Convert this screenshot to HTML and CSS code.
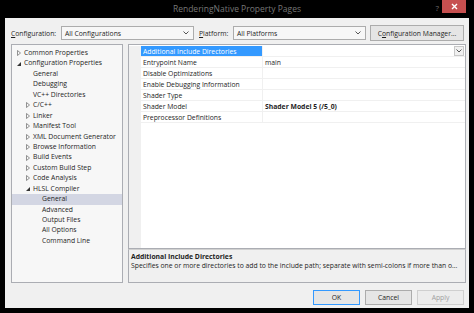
FILE: index.html
```html
<!DOCTYPE html>
<html>
<head>
<meta charset="utf-8">
<title>RenderingNative Property Pages</title>
<link rel="stylesheet" href="styles.css">
</head>
<body>
<div class="window">
  <div class="titlebar">
    <span class="title">RenderingNative Property Pages</span>
    <span class="help">?</span>
    <span class="close"><svg width="7" height="7" viewBox="0 0 7 7"><path d="M1 1L6 6M6 1L1 6" stroke="#fff" stroke-width="1.4"/></svg></span>
  </div>
  <div class="dialog">
    <div class="toprow">
      <span class="lbl lbl-config"><u>C</u>onfiguration:</span>
      <div class="combo combo-config"><span class="combo-text">All Configurations</span><svg class="chev" width="6" height="4" viewBox="0 0 6 4"><path d="M0.5 0.5L3 3L5.5 0.5" fill="none" stroke="#555" stroke-width="1"/></svg></div>
      <span class="lbl lbl-platform"><u>P</u>latform:</span>
      <div class="combo combo-platform"><span class="combo-text">All Platforms</span><svg class="chev" width="6" height="4" viewBox="0 0 6 4"><path d="M0.5 0.5L3 3L5.5 0.5" fill="none" stroke="#555" stroke-width="1"/></svg></div>
      <div class="btn btn-manager">C<u>o</u>nfiguration Manager...</div>
    </div>
    <div class="main">
      <div class="tree">
        <div class="node lv0"><span class="tri"><svg width="4" height="6" viewBox="0 0 4 6"><path d="M0.5 0.5L3.5 3L0.5 5.5Z" fill="none" stroke="#777" stroke-width="0.8"/></svg></span>Common Properties</div>
        <div class="node lv0"><span class="tri"><svg width="4" height="4" viewBox="0 0 4 4"><path d="M4 0L4 4L0 4Z" fill="#333"/></svg></span>Configuration Properties</div>
        <div class="node lv1">General</div>
        <div class="node lv1">Debugging</div>
        <div class="node lv1">VC++ Directories</div>
        <div class="node lv1 has"><span class="tri"><svg width="4" height="6" viewBox="0 0 4 6"><path d="M0.5 0.5L3.5 3L0.5 5.5Z" fill="none" stroke="#777" stroke-width="0.8"/></svg></span>C/C++</div>
        <div class="node lv1 has"><span class="tri"><svg width="4" height="6" viewBox="0 0 4 6"><path d="M0.5 0.5L3.5 3L0.5 5.5Z" fill="none" stroke="#777" stroke-width="0.8"/></svg></span>Linker</div>
        <div class="node lv1 has"><span class="tri"><svg width="4" height="6" viewBox="0 0 4 6"><path d="M0.5 0.5L3.5 3L0.5 5.5Z" fill="none" stroke="#777" stroke-width="0.8"/></svg></span>Manifest Tool</div>
        <div class="node lv1 has"><span class="tri"><svg width="4" height="6" viewBox="0 0 4 6"><path d="M0.5 0.5L3.5 3L0.5 5.5Z" fill="none" stroke="#777" stroke-width="0.8"/></svg></span>XML Document Generator</div>
        <div class="node lv1 has"><span class="tri"><svg width="4" height="6" viewBox="0 0 4 6"><path d="M0.5 0.5L3.5 3L0.5 5.5Z" fill="none" stroke="#777" stroke-width="0.8"/></svg></span>Browse Information</div>
        <div class="node lv1 has"><span class="tri"><svg width="4" height="6" viewBox="0 0 4 6"><path d="M0.5 0.5L3.5 3L0.5 5.5Z" fill="none" stroke="#777" stroke-width="0.8"/></svg></span>Build Events</div>
        <div class="node lv1 has"><span class="tri"><svg width="4" height="6" viewBox="0 0 4 6"><path d="M0.5 0.5L3.5 3L0.5 5.5Z" fill="none" stroke="#777" stroke-width="0.8"/></svg></span>Custom Build Step</div>
        <div class="node lv1 has"><span class="tri"><svg width="4" height="6" viewBox="0 0 4 6"><path d="M0.5 0.5L3.5 3L0.5 5.5Z" fill="none" stroke="#777" stroke-width="0.8"/></svg></span>Code Analysis</div>
        <div class="node lv1 has"><span class="tri"><svg width="4" height="4" viewBox="0 0 4 4"><path d="M4 0L4 4L0 4Z" fill="#333"/></svg></span>HLSL Compiler</div>
        <div class="node lv2 selected">General</div>
        <div class="node lv2">Advanced</div>
        <div class="node lv2">Output Files</div>
        <div class="node lv2">All Options</div>
        <div class="node lv2">Command Line</div>
      </div>
      <div class="right">
        <div class="grid">
          <div class="row">
            <div class="gutter"></div>
            <div class="name"><span class="sel">Additional Include Directories</span></div>
            <div class="value value-drop"><span class="dropbtn"><svg width="6" height="4" viewBox="0 0 6 4"><path d="M0.5 0.5L3 3L5.5 0.5" fill="none" stroke="#555" stroke-width="1"/></svg></span></div>
          </div>
          <div class="row">
            <div class="gutter"></div>
            <div class="name">Entrypoint Name</div>
            <div class="value">main</div>
          </div>
          <div class="row">
            <div class="gutter"></div>
            <div class="name">Disable Optimizations</div>
            <div class="value"></div>
          </div>
          <div class="row">
            <div class="gutter"></div>
            <div class="name">Enable Debugging Information</div>
            <div class="value"></div>
          </div>
          <div class="row">
            <div class="gutter"></div>
            <div class="name">Shader Type</div>
            <div class="value"></div>
          </div>
          <div class="row">
            <div class="gutter"></div>
            <div class="name">Shader Model</div>
            <div class="value bold">Shader Model 5 (/5_0)</div>
          </div>
          <div class="row">
            <div class="gutter"></div>
            <div class="name">Preprocessor Definitions</div>
            <div class="value"></div>
          </div>
          <div class="filler"></div>
        </div>
        <div class="desc">
          <div class="desc-title">Additional Include Directories</div>
          <div class="desc-text">Specifies one or more directories to add to the include path; separate with semi-colons if more than o...</div>
        </div>
      </div>
    </div>
    <div class="buttons">
      <div class="btn btn-default">OK</div>
      <div class="btn">Cancel</div>
      <div class="btn btn-disabled">Apply</div>
    </div>
  </div>
</div>
</body>
</html>
```
FILE: styles.css
```css
* { box-sizing: border-box; }
html, body {
  margin: 0;
  padding: 0;
  background: #000;
  width: 474px;
  height: 313px;
  overflow: hidden;
}
body {
  font-family: "Open Sans", "Noto Sans", sans-serif;
  font-size: 6.8px;
  color: #1e1e1e;
}
.window {
  width: 474px;
  height: 313px;
  display: flex;
  flex-direction: column;
}
.titlebar {
  height: 18px;
  flex-shrink: 0;
  position: relative;
  display: flex;
  justify-content: center;
  align-items: center;
}
.title {
  font-size: 8.5px;
  color: #767676;
  margin-top: -1px;
}
.help {
  position: absolute;
  right: 35px;
  top: 2px;
  color: #6e6e6e;
  font-size: 8px;
}
.close {
  position: absolute;
  right: 8px;
  top: 0;
  width: 24px;
  height: 13px;
  background: #c75050;
  display: flex;
  align-items: center;
  justify-content: center;
}
.dialog {
  margin: 0 5px;
  height: 290px;
  background: #f0f0f0;
  padding: 7px 3px 3px 6px;
  display: flex;
  flex-direction: column;
}
.toprow {
  height: 16px;
  flex-shrink: 0;
  display: flex;
  align-items: center;
}
.lbl { white-space: nowrap; flex-shrink: 0; }
.lbl-config { width: 50px; }
.lbl-platform { width: 34px; margin-left: 5px; }
.combo {
  flex-shrink: 0;
  height: 14px;
  border: 1px solid #acacac;
  background: #f7f7f7;
  display: flex;
  align-items: center;
  justify-content: space-between;
  padding: 0 4px 0 3px;
}
.combo-config { width: 133px; }
.combo-platform { width: 133px; }
.chev { display: block; }
.btn {
  flex-shrink: 0;
  height: 15px;
  border: 1px solid #acacac;
  background: #e5e5e5;
  display: flex;
  align-items: center;
  justify-content: center;
  white-space: nowrap;
}
.btn-manager {
  width: 94px;
  height: 16px;
  margin-left: 4px;
}
.main {
  margin-top: 3px;
  height: 239px;
  flex-shrink: 0;
  display: flex;
}
.tree {
  width: 112px;
  flex-shrink: 0;
  border: 1px solid #abadb3;
  background: #f7f7f7;
  padding-top: 3px;
  overflow: hidden;
}
.node {
  height: 10.45px;
  line-height: 10.45px;
  white-space: nowrap;
  display: flex;
  align-items: center;
}
.lv0 { padding-left: 5px; }
.lv1 { padding-left: 21px; }
.lv1.has { padding-left: 14px; }
.lv2 { padding-left: 30px; }
.tri {
  width: 7px;
  display: flex;
  align-items: center;
}
.tri svg { display: block; }
.selected { background: #d3d6e3; }
.right {
  flex: 1;
  min-width: 0;
  margin-left: 5px;
  display: flex;
  flex-direction: column;
}
.grid {
  height: 205px;
  flex-shrink: 0;
  border: 1px solid #abadb3;
  background: #fff;
  padding-top: 1px;
  display: flex;
  flex-direction: column;
}
.row {
  height: 11px;
  flex-shrink: 0;
  display: flex;
  border-bottom: 1px solid #f0f0f0;
}
.gutter {
  width: 12px;
  background: #f0f0f0;
}
.name {
  width: 122px;
  flex-shrink: 0;
  border-right: 1px solid #f0f0f0;
  display: flex;
  align-items: center;
  white-space: nowrap;
  padding-left: 2px;
}
.row:first-child .name { padding-left: 0; }
.name .sel {
  background: #3399ff;
  color: #fff;
  width: 100%;
  height: 100%;
  display: flex;
  align-items: center;
  padding-left: 2px;
}
.value {
  flex: 1;
  display: flex;
  align-items: center;
  padding-left: 2px;
  white-space: nowrap;
}
.value-drop { justify-content: flex-end; padding-right: 1px; }
.dropbtn {
  width: 10px;
  height: 10px;
  border: 1px solid #c8c8c8;
  background: #f0f0f0;
  display: flex;
  align-items: center;
  justify-content: center;
}
.bold { font-weight: 700; }
.filler {
  flex: 1;
  display: flex;
}
.filler::before {
  content: "";
  width: 12px;
  background: #f0f0f0;
}
.desc {
  flex: 1;
  border: 1px solid #abadb3;
  border-top: 1px solid #d0d0d0;
  background: #f0f0f0;
  padding: 2px 2px 0 2px;
  overflow: hidden;
}
.desc-title {
  font-weight: 700;
  line-height: 9px;
}
.desc-text {
  line-height: 9px;
  white-space: nowrap;
}
.buttons {
  margin-top: 7px;
  display: flex;
  justify-content: flex-end;
  gap: 5px;
  padding-right: 2px;
}
.buttons .btn { width: 47px; }
.btn-default { border-color: #3399ff; }
.btn-disabled { color: #a0a0a0; border-color: #cfcfcf; background: #ececec; }
```
